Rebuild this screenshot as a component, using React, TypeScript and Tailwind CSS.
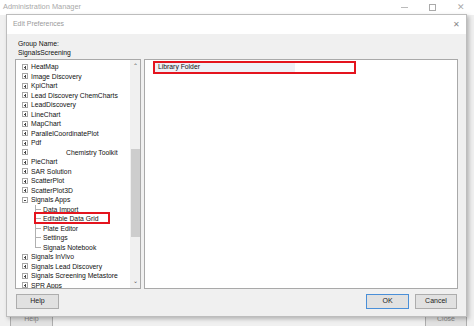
import React from "react";

type Row = { label: string; kind: "root" | "open" | "child" | "plain" };

const rows: Row[] = [
  { label: "HeatMap", kind: "root" },
  { label: "Image Discovery", kind: "root" },
  { label: "KpiChart", kind: "root" },
  { label: "Lead Discovery ChemCharts", kind: "root" },
  { label: "LeadDiscovery", kind: "root" },
  { label: "LineChart", kind: "root" },
  { label: "MapChart", kind: "root" },
  { label: "ParallelCoordinatePlot", kind: "root" },
  { label: "Pdf", kind: "root" },
  { label: "Chemistry Toolkit", kind: "plain" },
  { label: "PieChart", kind: "root" },
  { label: "SAR Solution", kind: "root" },
  { label: "ScatterPlot", kind: "root" },
  { label: "ScatterPlot3D", kind: "root" },
  { label: "Signals Apps", kind: "open" },
  { label: "Data Import", kind: "child" },
  { label: "Editable Data Grid", kind: "child" },
  { label: "Plate Editor", kind: "child" },
  { label: "Settings", kind: "child" },
  { label: "Signals Notebook", kind: "child" },
  { label: "Signals InVivo", kind: "root" },
  { label: "Signals Lead Discovery", kind: "root" },
  { label: "Signals Screening Metastore", kind: "root" },
  { label: "SPR Apps", kind: "root" },
];

function Expander({ open }: { open?: boolean }) {
  return (
    <div className="relative w-[6px] h-[6px] border border-[#a8a8a8] bg-white shrink-0">
      <div className="absolute left-[1px] top-[2px] w-[2px] h-[1px] bg-[#444]" />
      {!open && <div className="absolute left-[1.5px] top-[1px] w-[1px] h-[3px] bg-[#444]" />}
    </div>
  );
}

function TreeRow({ row, last }: { row: Row; last: boolean }) {
  if (row.kind === "child") {
    const hl = row.label === "Editable Data Grid";
    return (
      <div className="relative h-[9.5px] flex items-center pl-[26px]">
        <div className={`absolute left-[19px] top-0 w-[1px] bg-[#b0b0b0] ${last ? "h-[5px]" : "h-[9.5px]"}`} />
        <div className="w-[6px] h-[1px] bg-[#b0b0b0] mr-[2px] -ml-[7px]" />
        <span>{row.label}</span>
        {hl && <div className="absolute left-[18px] top-[-2px] w-[76px] h-[12px] border-2 border-[#e4141e]" />}
      </div>
    );
  }
  if (row.kind === "plain") {
    return (
      <div className="h-[9.5px] flex items-center pl-[6px]">
        <Expander />
        <span className="ml-[38px]">{row.label}</span>
      </div>
    );
  }
  return (
    <div className="h-[9.5px] flex items-center pl-[6px]">
      <Expander open={row.kind === "open"} />
      <span className="ml-[3px]">{row.label}</span>
    </div>
  );
}

function Btn({ label, focus, className = "" }: { label: string; focus?: boolean; className?: string }) {
  return (
    <div
      className={`h-[15px] flex items-center justify-center text-[7px] text-[#222] bg-[#e1e1e1] border ${
        focus ? "border-[#4a8fd8]" : "border-[#adadad]"
      } ${className}`}
    >
      {label}
    </div>
  );
}

export default function App() {
  return (
    <div
      className="relative w-[474px] h-[326px] overflow-hidden bg-[#f0f0f0]"
      style={{ fontFamily: '"Liberation Sans", Arial, sans-serif' }}
    >
      {/* background window */}
      <div className="h-[15px] bg-white flex items-center pl-[3px] text-[7.4px] text-[#a9a9a9]">
        <span className="-mt-[1px]">Administration Manager</span>
        <div className="ml-auto flex items-center gap-[21px] pr-[9px] text-[#aaa]">
          <span className="w-[7px] h-[1px] bg-[#bbb]" />
          <span className="w-[7px] h-[7px] border border-[#aaa]" />
          <span className="text-[9px] leading-none">✕</span>
        </div>
      </div>
      <Btn label="Help" className="absolute left-[10px] top-[312px] w-[43px] !text-[#888]" />
      <Btn label="Close" className="absolute left-[425px] top-[312px] w-[42px] !text-[#888]" />

      {/* dialog */}
      <div className="absolute left-[6px] top-[14px] w-[461px] h-[303px] bg-[#f0f0f0] border border-[#bdbdbd] shadow-[2px_2px_4px_rgba(0,0,0,0.25)] flex flex-col">
        <div className="h-[19px] bg-white flex items-center pl-[6px] text-[6.9px] text-[#9a9a9a] shrink-0">
          <span>Edit Preferences</span>
          <span className="ml-auto mr-[6px] text-[8px] text-[#888]">✕</span>
        </div>
        <div className="flex-1 flex flex-col px-[8px] pt-[5px] text-[6.8px] text-[#111]">
          <div className="leading-[9px] pl-[3px]">Group Name:</div>
          <div className="leading-[9px] pl-[3px]">SignalsScreening</div>
          <div className="flex mt-[2px] h-[230px] gap-[3px]">
            {/* tree */}
            <div className="w-[126px] bg-white border border-[#a9a9a9] flex">
              <div className="flex-1 pt-[2px] leading-[9.5px] whitespace-nowrap overflow-hidden">
                {rows.map((r, i) => (
                  <TreeRow key={i} row={r} last={r.label === "Signals Notebook"} />
                ))}
              </div>
              <div className="w-[10px] bg-[#f0f0f0] flex flex-col items-center">
                <span className="h-[12px] text-[6px] text-[#555] leading-[12px]">⌃</span>
                <div className="mt-[77px] w-[9px] h-[88px] bg-[#cdcdcd]" />
                <span className="mt-auto h-[12px] text-[6px] text-[#555] leading-[10px]">⌄</span>
              </div>
            </div>
            {/* right panel */}
            <div className="flex-1 bg-white border border-[#a9a9a9] pl-[8px] pt-[1px]">
              <div className="w-[203px] h-[13px] border-2 border-[#e4141e] flex items-center">
                <div className="h-full w-[140px] bg-[#eef0f6] pl-[3px] flex items-center">Library Folder</div>
              </div>
            </div>
          </div>
          <div className="flex items-center mt-[5px]">
            <Btn label="Help" className="w-[43px] ml-[1px]" />
            <Btn label="OK" focus className="w-[43px] ml-auto" />
            <Btn label="Cancel" className="w-[42px] ml-[6px] mr-[1px]" />
          </div>
        </div>
      </div>
    </div>
  );
}
